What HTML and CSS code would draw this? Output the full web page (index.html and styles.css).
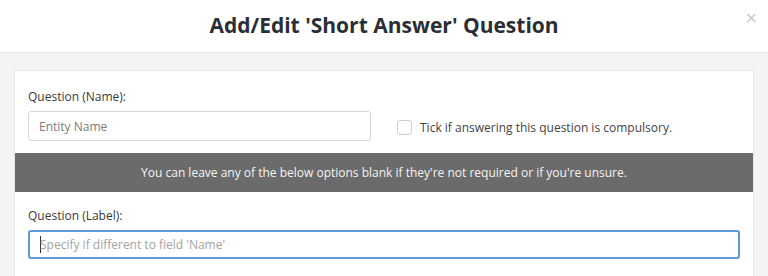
FILE: index.html
```html
<!DOCTYPE html>
<html lang="en">

<head>
  <meta charset="UTF-8">
  <meta name="viewport" content="width=device-width, initial-scale=1.0">
  <title>Add/Edit Question</title>
  <link rel="stylesheet" href="styles.css">
</head>

<body>
  <!-- Modal header -->
  <header class="modal-header">
    <h1 class="modal-title">Add/Edit 'Short Answer' Question</h1>
    <span class="modal-close">&times;</span>
  </header>

  <!-- Modal body -->
  <main class="modal-body">
    <section class="form-card">
      <div class="form-row">
        <div class="form-group">
          <label class="form-label" for="q-name">Question (Name):</label>
          <input class="form-input" id="q-name" type="text" placeholder="Entity Name">
        </div>
        <label class="check-option">
          <span class="check-box"></span>
          <span class="check-text">Tick if answering this question is compulsory.</span>
        </label>
      </div>

      <div class="notice-bar">You can leave any of the below options blank if they're not required or if you're unsure.</div>

      <div class="form-group form-group-wide">
        <label class="form-label" for="q-label">Question (Label):</label>
        <div class="form-input form-input-focus"><span class="caret"></span><span class="placeholder">Specify if different to field 'Name'</span></div>
      </div>
    </section>
  </main>
</body>

</html>
```

FILE: styles.css
```css
/* Reset */
* {
  margin: 0;
  padding: 0;
  box-sizing: border-box;
}

body {
  font-family: "Open Sans", Arial, sans-serif;
  color: #333;
  background: #f3f4f4;
  width: 768px;
  height: 276px;
  overflow: hidden;
}

/* Header */
.modal-header {
  position: relative;
  height: 53px;
  background: #fff;
  border-bottom: 1px solid #e3e6e6;
  display: flex;
  align-items: center;
  justify-content: center;
}

.modal-title {
  font-size: 21px;
  font-weight: 700;
  color: #2a2f35;
  margin-top: -2px;
}

.modal-close {
  position: absolute;
  top: 8px;
  right: 10px;
  font-size: 16px;
  color: #c8c8c8;
  font-family: "DejaVu Sans", sans-serif;
}

/* Body */
.modal-body {
  padding: 17px 14px 0 14px;
}

.form-card {
  background: #fff;
  border: 1px solid #e4e7e7;
  border-radius: 2px;
  padding: 18px 13px 20px 13px;
  width: 740px;
}

.form-row {
  display: flex;
  align-items: flex-end;
  gap: 26px;
}

.form-group {
  width: 343px;
}

.form-group-wide {
  width: 712px;
  margin-top: 16px;
}

.form-label {
  display: block;
  font-size: 12px;
  line-height: 16px;
  color: #3a3a3a;
  margin-bottom: 6px;
}

.form-input {
  display: block;
  width: 100%;
  height: 30px;
  border: 1px solid #d6d6d6;
  border-radius: 3px;
  padding: 0 10px;
  font-family: "Open Sans", Arial, sans-serif;
  font-size: 12px;
  color: #333;
  background: #fff;
  outline: none;
}

.form-input::placeholder {
  color: #7b7b7b;
}

.form-input-focus {
  height: 29px;
  border: 2px solid #5b9ad6;
  border-radius: 3px;
  padding: 0 9px 0 10px;
  display: flex;
  align-items: center;
}

.caret {
  display: inline-block;
  width: 1px;
  height: 17px;
  background: #333;
  margin-right: -1px;
}

.placeholder {
  font-size: 12px;
  color: #a3a3a3;
}

/* Checkbox */
.check-option {
  display: flex;
  align-items: center;
  height: 28px;
}

.check-box {
  display: inline-block;
  width: 15px;
  height: 15px;
  border: 1px solid #cfcfcf;
  border-radius: 3px;
  background: #fff;
  margin-right: 8px;
}

.check-text {
  font-size: 12px;
  color: #444;
}

/* Notice */
.notice-bar {
  margin: 12px -13px 0 -13px;
  height: 39px;
  background: #6b6b6b;
  color: #f4f4f4;
  font-size: 12px;
  display: flex;
  align-items: center;
  justify-content: center;
}
```
